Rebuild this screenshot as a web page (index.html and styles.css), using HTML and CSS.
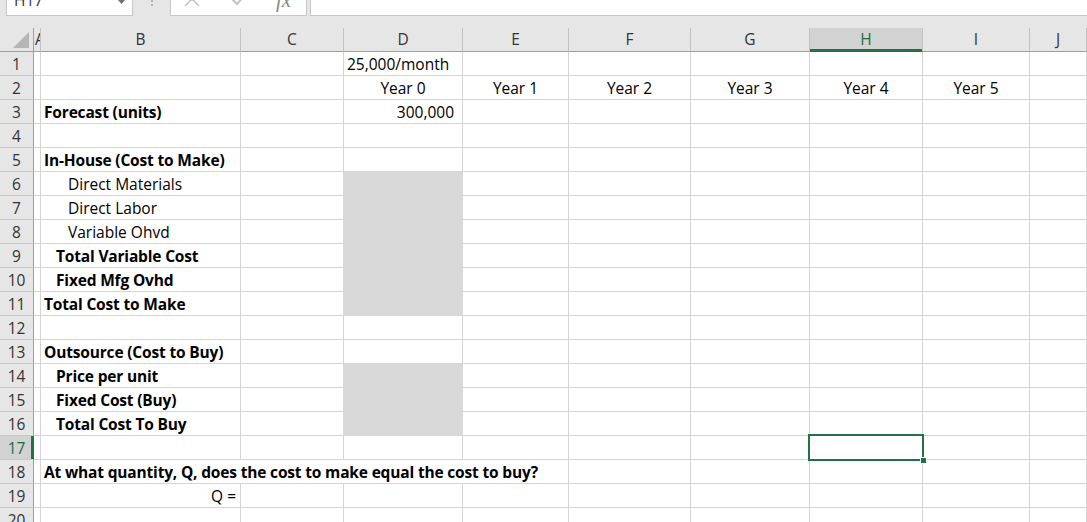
FILE: index.html
```html
<!DOCTYPE html>
<html>
<head>
<meta charset="utf-8">
<link rel="stylesheet" href="styles.css">
</head>
<body>
<div class="fbar">
  <div class="namebox"><span class="nbtext">H17</span><svg class="nbarrow" width="7" height="4" viewBox="0 0 7 4"><path d="M0 0H7L3.5 4Z" fill="#6f6f6f"/></svg></div>
  <div class="grip"></div>
  <div class="fbtns">
    <svg class="ico-x" width="16" height="16" viewBox="0 0 16 16"><path d="M1 1L15 15M15 1L1 15" stroke="#c4c4c4" stroke-width="1.6" fill="none"/></svg>
    <svg class="ico-ok" width="18" height="14" viewBox="0 0 18 14"><path d="M1 6L7 12L17 1" stroke="#c4c4c4" stroke-width="2.2" fill="none"/></svg>
    <span class="fx">fx</span>
  </div>
  <div class="finput"></div>
</div>
<div class="sheet">
  <div class="h corner"><svg width="17" height="17" viewBox="0 0 17 17"><path d="M0 16H16V0Z" fill="#b5b5b5"/></svg></div>
  <div class="h colA">A</div><div class="h">B</div><div class="h">C</div><div class="h">D</div><div class="h">E</div><div class="h">F</div><div class="h">G</div><div class="h act">H</div><div class="h">I</div><div class="h">J</div>

  <div class="rh">1</div><div class="c"></div><div class="c"></div><div class="c"></div><div class="c">25,000/month</div><div class="c"></div><div class="c"></div><div class="c"></div><div class="c"></div><div class="c"></div><div class="c"></div>

  <div class="rh">2</div><div class="c"></div><div class="c"></div><div class="c"></div><div class="c ctr">Year 0</div><div class="c ctr">Year 1</div><div class="c ctr">Year 2</div><div class="c ctr">Year 3</div><div class="c ctr">Year 4</div><div class="c ctr">Year 5</div><div class="c"></div>

  <div class="rh">3</div><div class="c"></div><div class="c b">Forecast (units)</div><div class="c"></div><div class="c num">300,000</div><div class="c"></div><div class="c"></div><div class="c"></div><div class="c"></div><div class="c"></div><div class="c"></div>

  <div class="rh">4</div><div class="c"></div><div class="c"></div><div class="c"></div><div class="c"></div><div class="c"></div><div class="c"></div><div class="c"></div><div class="c"></div><div class="c"></div><div class="c"></div>

  <div class="rh">5</div><div class="c"></div><div class="c b">In-House (Cost to Make)</div><div class="c"></div><div class="c"></div><div class="c"></div><div class="c"></div><div class="c"></div><div class="c"></div><div class="c"></div><div class="c"></div>

  <div class="rh">6</div><div class="c"></div><div class="c i2">Direct Materials</div><div class="c flr"></div><div class="c fl"></div><div class="c"></div><div class="c"></div><div class="c"></div><div class="c"></div><div class="c"></div><div class="c"></div>

  <div class="rh">7</div><div class="c"></div><div class="c i2">Direct Labor</div><div class="c flr"></div><div class="c fl"></div><div class="c"></div><div class="c"></div><div class="c"></div><div class="c"></div><div class="c"></div><div class="c"></div>

  <div class="rh">8</div><div class="c"></div><div class="c i2">Variable Ohvd</div><div class="c flr"></div><div class="c fl"></div><div class="c"></div><div class="c"></div><div class="c"></div><div class="c"></div><div class="c"></div><div class="c"></div>

  <div class="rh">9</div><div class="c"></div><div class="c b i1">Total Variable Cost</div><div class="c flr"></div><div class="c fl"></div><div class="c"></div><div class="c"></div><div class="c"></div><div class="c"></div><div class="c"></div><div class="c"></div>

  <div class="rh">10</div><div class="c"></div><div class="c b i1">Fixed Mfg Ovhd</div><div class="c flr"></div><div class="c fl"></div><div class="c"></div><div class="c"></div><div class="c"></div><div class="c"></div><div class="c"></div><div class="c"></div>

  <div class="rh">11</div><div class="c"></div><div class="c b">Total Cost to Make</div><div class="c flr"></div><div class="c fl"></div><div class="c"></div><div class="c"></div><div class="c"></div><div class="c"></div><div class="c"></div><div class="c"></div>

  <div class="rh">12</div><div class="c"></div><div class="c"></div><div class="c"></div><div class="c"></div><div class="c"></div><div class="c"></div><div class="c"></div><div class="c"></div><div class="c"></div><div class="c"></div>

  <div class="rh">13</div><div class="c"></div><div class="c b">Outsource (Cost to Buy)</div><div class="c"></div><div class="c"></div><div class="c"></div><div class="c"></div><div class="c"></div><div class="c"></div><div class="c"></div><div class="c"></div>

  <div class="rh">14</div><div class="c"></div><div class="c b i1">Price per unit</div><div class="c flr"></div><div class="c fl"></div><div class="c"></div><div class="c"></div><div class="c"></div><div class="c"></div><div class="c"></div><div class="c"></div>

  <div class="rh">15</div><div class="c"></div><div class="c b i1">Fixed Cost (Buy)</div><div class="c flr"></div><div class="c fl"></div><div class="c"></div><div class="c"></div><div class="c"></div><div class="c"></div><div class="c"></div><div class="c"></div>

  <div class="rh">16</div><div class="c"></div><div class="c b i1">Total Cost To Buy</div><div class="c flr"></div><div class="c fl"></div><div class="c"></div><div class="c"></div><div class="c"></div><div class="c"></div><div class="c"></div><div class="c"></div>

  <div class="rh act">17</div><div class="c"></div><div class="c"></div><div class="c"></div><div class="c"></div><div class="c"></div><div class="c"></div><div class="c"></div><div class="c sel"><span class="handle"></span></div><div class="c"></div><div class="c"></div>

  <div class="rh">18</div><div class="c"></div><div class="c b span4">At what quantity, Q, does the cost to make equal the cost to buy?</div><div class="c"></div><div class="c"></div><div class="c"></div><div class="c"></div><div class="c"></div>

  <div class="rh">19</div><div class="c"></div><div class="c num q">Q =</div><div class="c"></div><div class="c"></div><div class="c"></div><div class="c"></div><div class="c"></div><div class="c"></div><div class="c"></div><div class="c"></div>

  <div class="rh">20</div><div class="c"></div><div class="c"></div><div class="c"></div><div class="c"></div><div class="c"></div><div class="c"></div><div class="c"></div><div class="c"></div><div class="c"></div><div class="c"></div>
</div>
</body>
</html>
```
FILE: styles.css
```css
*, *::before, *::after { box-sizing: border-box; margin: 0; padding: 0; }
html, body { width: 1087px; height: 522px; overflow: hidden; }
body { background: #e6e6e6; font-family: "Open Sans", "Liberation Sans", sans-serif; color: #000; }

.fbar { display: flex; height: 28px; margin-top: -12px; }
.namebox { margin-left: 6px; width: 127px; background: #fff; border: 1px solid #c6c6c6; display: flex; padding: 3px 7px 0 7px; }
.nbtext { font-size: 15.5px; line-height: 16px; color: #333; }
.nbarrow { margin-left: auto; margin-top: 8px; }
.grip { width: 2px; height: 18px; margin-left: 18px; background: repeating-linear-gradient(#b3b3b3 0 2px, transparent 2px 4px); }
.fbtns { margin-left: 17px; width: 137px; background: #fff; border: 1px solid #c6c6c6; display: flex; align-items: flex-start; }
.ico-x { margin-left: 13px; margin-top: 2px; }
.ico-ok { margin-left: 30px; margin-top: 3px; }
.fx { margin-left: 28px; margin-top: 1px; font-family: "Liberation Serif", serif; font-style: italic; font-size: 21px; line-height: 20px; color: #8a8a8a; }
.finput { margin-left: 3px; flex: 1; background: #fff; border: 1px solid #c6c6c6; border-right: none; }

.sheet { margin-top: 12px; display: grid; grid-template-columns: 34px 7px 200px 103px 119px 106px 122px 119px 113px 107px 1fr; grid-auto-rows: 24px; background: #fff; }

.h { background: #e6e6e6; border-right: 1px solid #c0c0c0; border-bottom: 1px solid #9f9f9f; text-align: center; font-size: 15.5px; line-height: 23px; color: #333; overflow: hidden; white-space: nowrap; }
.corner { border-right-color: #9f9f9f; display: flex; align-items: flex-end; justify-content: flex-end; padding: 0 3px 2px 0; }
.colA { text-align: left; padding-left: 1px; }
.h.act { background: #d2d2d2; color: #1e6b41; box-shadow: inset 0 -2px 0 #217346; border-bottom-color: #217346; }

.rh { background: #e6e6e6; border-right: 1px solid #9f9f9f; border-bottom: 1px solid #c8c8c8; text-align: center; font-size: 15.5px; line-height: 23px; padding-top: 1px; color: #333; overflow: hidden; }
.rh.act { background: #d2d2d2; color: #1e6b41; box-shadow: inset -2px 0 0 #217346; border-right-color: #217346; }

.c { border-right: 1px solid #d4d4d4; border-bottom: 1px solid #d4d4d4; font-size: 15.5px; line-height: 23px; padding: 1px 3px 0 3px; white-space: nowrap; overflow: hidden; }
.b { font-weight: bold; letter-spacing: -0.17px; }
.i1 { padding-left: 15px; }
.i2 { padding-left: 27px; }
.ctr { text-align: center; }
.num { text-align: right; padding-right: 8px; }
.q { padding-right: 4px; }
.span4 { grid-column: span 4; overflow: visible; }
.fl { background: #d9d9d9; border-color: #d9d9d9; }
.flr { border-right-color: #d9d9d9; }

.sel { position: relative; overflow: visible; }
.sel::after { content: ""; position: absolute; left: -2px; top: -2px; width: 116px; height: 27px; border: 2px solid #217346; z-index: 2; }
.handle { position: absolute; left: 110px; top: 21px; width: 7px; height: 7px; background: #217346; border: 1px solid #fff; z-index: 3; }
```
